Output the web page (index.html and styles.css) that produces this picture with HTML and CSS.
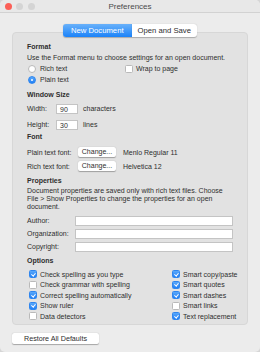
FILE: index.html
```html
<!DOCTYPE html>
<html lang="en">
<head>
    <meta charset="UTF-8">
    <title>Preferences</title>
    <link rel="stylesheet" href="styles.css">
</head>
<body>
    <div class="window">
        <div class="titlebar">
            <div class="lights">
                <span class="light close"></span>
                <span class="light"></span>
                <span class="light"></span>
            </div>
            <div class="title">Preferences</div>
        </div>
        <div class="content">
            <div class="tabs">
                <div class="tab active">New Document</div>
                <div class="tab">Open and Save</div>
            </div>
            <div class="panel">
                <div class="heading">Format</div>
                <div class="note">Use the Format menu to choose settings for an open document.</div>
                <div class="format-grid">
                    <div class="opt"><span class="radio"></span>Rich text</div>
                    <div class="opt"><span class="check"></span>Wrap to page</div>
                    <div class="opt"><span class="radio on"></span>Plain text</div>
                </div>

                <div class="heading gap-size">Window Size</div>
                <div class="field-row first">
                    <span class="label size-label">Width:</span>
                    <span class="input small">90</span>
                    <span class="unit">characters</span>
                </div>
                <div class="field-row">
                    <span class="label size-label">Height:</span>
                    <span class="input small">30</span>
                    <span class="unit">lines</span>
                </div>

                <div class="heading gap-font">Font</div>
                <div class="font-row first">
                    <span class="label font-label">Plain text font:</span>
                    <span class="btn change">Change...</span>
                    <span class="font-name">Menlo Regular 11</span>
                </div>
                <div class="font-row">
                    <span class="label font-label">Rich text font:</span>
                    <span class="btn change">Change...</span>
                    <span class="font-name">Helvetica 12</span>
                </div>

                <div class="heading gap-props">Properties</div>
                <div class="desc">Document properties are saved only with rich text files. Choose File &gt; Show Properties to change the properties for an open document.</div>
                <div class="prop-row first">
                    <span class="label prop-label">Author:</span>
                    <span class="input wide"></span>
                </div>
                <div class="prop-row">
                    <span class="label prop-label">Organization:</span>
                    <span class="input wide"></span>
                </div>
                <div class="prop-row">
                    <span class="label prop-label">Copyright:</span>
                    <span class="input wide"></span>
                </div>

                <div class="heading gap-options">Options</div>
                <div class="options-grid">
                    <div class="opt"><span class="check on"></span>Check spelling as you type</div>
                    <div class="opt"><span class="check on"></span>Smart copy/paste</div>
                    <div class="opt"><span class="check"></span>Check grammar with spelling</div>
                    <div class="opt"><span class="check on"></span>Smart quotes</div>
                    <div class="opt"><span class="check on"></span>Correct spelling automatically</div>
                    <div class="opt"><span class="check on"></span>Smart dashes</div>
                    <div class="opt"><span class="check on"></span>Show ruler</div>
                    <div class="opt"><span class="check"></span>Smart links</div>
                    <div class="opt"><span class="check"></span>Data detectors</div>
                    <div class="opt"><span class="check on"></span>Text replacement</div>
                </div>
            </div>
            <div class="btn restore">Restore All Defaults</div>
        </div>
    </div>
</body>
</html>
```

FILE: styles.css
```css
body {
    margin: 0;
    background: #d6d6d6;
    font-family: "Liberation Sans", Arial, sans-serif;
    font-size: 7px;
    color: #2e2e2e;
}
.window {
    width: 260px;
    height: 352px;
    background: #ececec;
    border-radius: 5px;
    overflow: hidden;
}
.titlebar {
    height: 12px;
    border-bottom: 1px solid #d2d2d2;
    background: #e8e8e8;
    display: flex;
    align-items: center;
    position: relative;
}
.lights {
    display: flex;
    gap: 4.5px;
    padding-left: 4.5px;
}
.light {
    width: 7px;
    height: 7px;
    border-radius: 50%;
    background: #d4d4d4;
}
.light.close {
    background: #fb5f57;
}
.title {
    position: absolute;
    left: 0;
    right: 0;
    text-align: center;
    font-size: 8px;
    color: #4a4a4a;
}
.content {
    padding: 11px 12px 0;
}
.tabs {
    display: flex;
    justify-content: center;
    position: relative;
    z-index: 1;
    margin-bottom: -5px;
}
.tab {
    height: 13px;
    line-height: 13px;
    font-size: 7.7px;
    padding: 0 6px;
    background: #ffffff;
    box-shadow: 0 0.5px 1px rgba(0, 0, 0, 0.25);
    border-radius: 0 3px 3px 0;
}
.tab.active {
    background: linear-gradient(#69b1fa, #1b83f9);
    color: #ffffff;
    border-radius: 3px 0 0 3px;
    padding: 0 8px;
}
.panel {
    background: #e2e2e2;
    border: 1px solid #d7d7d7;
    border-radius: 4px;
    padding: 9px 14px 2px;
}
.heading {
    font-weight: bold;
    line-height: 10px;
}
.note {
    line-height: 10px;
    margin-top: 1px;
}
.opt {
    display: flex;
    align-items: center;
    white-space: nowrap;
}
.format-grid {
    display: grid;
    grid-template-columns: 97px auto;
    grid-auto-rows: 11px;
    padding-left: 1px;
}
.radio {
    width: 6px;
    height: 6px;
    border-radius: 50%;
    background: #ffffff;
    border: 0.5px solid #b9b9b9;
    margin-right: 4px;
    position: relative;
}
.radio.on {
    background: linear-gradient(#5aa8fa, #2080f6);
    border-color: #2f86ef;
}
.radio.on::after {
    content: "";
    position: absolute;
    left: 2px;
    top: 2px;
    width: 2px;
    height: 2px;
    border-radius: 50%;
    background: #ffffff;
}
.check {
    flex-shrink: 0;
    width: 6px;
    height: 6px;
    border-radius: 1.5px;
    background: #ffffff;
    border: 0.5px solid #b9b9b9;
    margin-right: 3px;
    position: relative;
}
.check.on {
    background: linear-gradient(#5aa8fa, #2080f6);
    border-color: #2f86ef;
}
.check.on::after {
    content: "";
    position: absolute;
    left: 2px;
    top: 0.5px;
    width: 1.5px;
    height: 3px;
    border-right: 1px solid #ffffff;
    border-bottom: 1px solid #ffffff;
    transform: rotate(40deg);
}
.gap-size {
    margin-top: 5px;
}
.field-row, .prop-row {
    display: flex;
    align-items: center;
    height: 13px;
    margin-top: 3px;
}
.field-row.first {
    margin-top: 2px;
}
.prop-row {
    margin-top: 0;
}
.prop-row.first {
    margin-top: 3px;
}
.label {
    flex-shrink: 0;
}
.size-label {
    width: 29px;
}
.font-label {
    width: 51px;
}
.prop-label {
    width: 48px;
}
.input {
    box-sizing: border-box;
    height: 10px;
    line-height: 10px;
    background: #ffffff;
    border: 0.5px solid #c4c4c4;
    padding-left: 3px;
}
.input.small {
    width: 22px;
}
.input.wide {
    width: 159px;
}
.unit {
    margin-left: 5px;
}
.gap-font {
    margin-top: 1px;
}
.font-row {
    display: flex;
    align-items: center;
    height: 14px;
}
.font-row.first {
    margin-top: 3px;
}
.btn {
    box-sizing: border-box;
    background: #ffffff;
    border-radius: 2px;
    box-shadow: 0 0.5px 1px rgba(0, 0, 0, 0.3);
    text-align: center;
    height: 10px;
    line-height: 10px;
}
.change {
    width: 38px;
}
.font-name {
    margin-left: 7px;
}
.gap-props {
    margin-top: 3px;
}
.desc {
    line-height: 8px;
    margin-top: 1px;
}
.gap-options {
    margin-top: 3px;
}
.options-grid {
    display: grid;
    grid-template-columns: 143px auto;
    grid-auto-rows: 10.5px;
    margin-top: 3px;
    padding-left: 2px;
}
.restore {
    width: 87px;
    margin-top: 8px;
    height: 11px;
    line-height: 11px;
    font-size: 7.2px;
}
```
